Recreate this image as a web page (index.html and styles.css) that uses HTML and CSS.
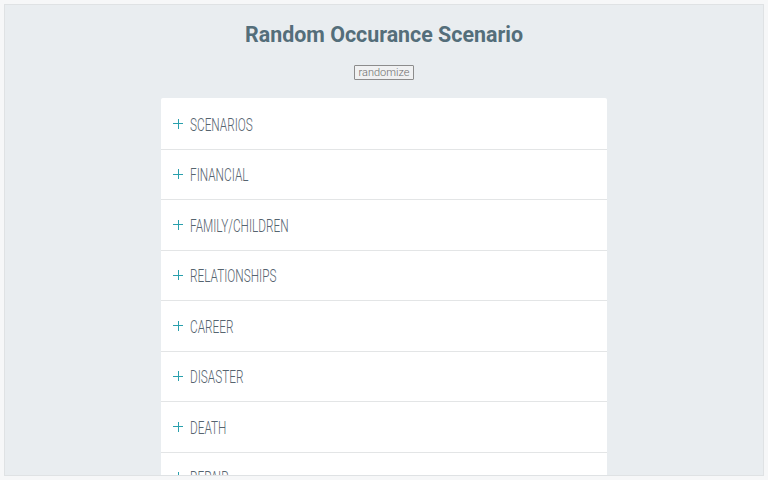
FILE: index.html
```html
<!DOCTYPE html>
<html>
<head>
<meta charset="utf-8">
<link rel="stylesheet" href="styles.css">
</head>
<body>
<div class="frame">
  <h1 class="title">Random Occurance Scenario</h1>
  <div class="actions"><button class="btn">randomize</button></div>
  <div class="card">
    <div class="row"><span class="plus"></span><span class="label">SCENARIOS</span></div>
    <div class="row"><span class="plus"></span><span class="label">FINANCIAL</span></div>
    <div class="row"><span class="plus"></span><span class="label">FAMILY/CHILDREN</span></div>
    <div class="row"><span class="plus"></span><span class="label">RELATIONSHIPS</span></div>
    <div class="row"><span class="plus"></span><span class="label">CAREER</span></div>
    <div class="row"><span class="plus"></span><span class="label">DISASTER</span></div>
    <div class="row"><span class="plus"></span><span class="label">DEATH</span></div>
    <div class="row"><span class="plus"></span><span class="label">REPAIR</span></div>
    <div class="row"><span class="plus"></span><span class="label">HEALTH</span></div>
  </div>
</div>
</body>
</html>
```
FILE: styles.css
```css
html, body {
  margin: 0;
  padding: 0;
  background: #f6f7f8;
  height: 100%;
  overflow: hidden;
}
body {
  padding: 4px;
  box-sizing: border-box;
}
.frame {
  height: 472px;
  box-sizing: border-box;
  background: #e9edf0;
  border: 1px solid #dfe2e4;
  overflow: hidden;
  display: flex;
  flex-direction: column;
  align-items: center;
}
.title {
  margin: 16px 0 0 0;
  font-family: Roboto, "Liberation Sans", sans-serif;
  font-weight: 700;
  font-size: 21.4px;
  line-height: 28px;
  color: #546e7a;
}
.actions {
  margin-top: 16px;
  height: 16px;
  display: flex;
}
.btn {
  font-family: Roboto, "Liberation Sans", sans-serif;
  font-weight: 300;
  font-size: 11px;
  color: #6e6e6e;
  background: #f0f1f2;
  border: 1px solid #8c8c8c;
  border-radius: 1px;
  padding: 0 4px;
  height: 15px;
  line-height: 13px;
}
.card {
  margin-top: 18px;
  padding-top: 1px;
  width: 446px;
  background: #fff;
  border-radius: 2px;
  flex-shrink: 0;
}
.row {
  height: 50.5px;
  box-sizing: border-box;
  border-bottom: 1px solid #e3e5e6;
  display: flex;
  align-items: center;
  padding-left: 12px;
}
.plus {
  position: relative;
  width: 10px;
  height: 10px;
  margin-right: 7px;
}
.plus::before, .plus::after {
  content: "";
  position: absolute;
  background: #2aa0ad;
}
.plus::before { left: 0; right: 0; top: 4.5px; height: 1.2px; }
.plus::after { top: 0; bottom: 0; left: 4.5px; width: 1.2px; }
.label {
  font-family: Roboto, "Liberation Sans", sans-serif;
  font-size: 18px;
  font-weight: 300;
  color: #56646f;
  display: inline-block;
  transform: scaleX(0.655);
  transform-origin: left center;
  line-height: 20px;
  padding-top: 2px;
}
```
